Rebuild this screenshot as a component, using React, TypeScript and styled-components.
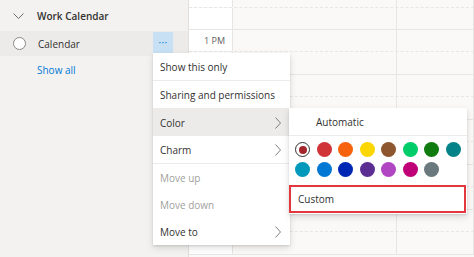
import React from 'react';
import styled, { createGlobalStyle } from 'styled-components';

const GlobalStyle = createGlobalStyle`
    html, body {
        margin: 0;
        padding: 0;
        width: 474px;
        height: 257px;
        overflow: hidden;
        font-family: "Open Sans", "Noto Sans", sans-serif;
    }
`;

const Page = styled.div`
    position: relative;
    display: flex;
    width: 474px;
    height: 257px;
    overflow: hidden;
    background: #faf9f8;
`;

const Sidebar = styled.div`
    width: 188px;
    flex-shrink: 0;
    background: #f3f2f1;
    border-right: 1px solid #e1dfdd;
    display: flex;
    flex-direction: column;
`;

const GroupHeader = styled.div`
    height: 31px;
    display: flex;
    align-items: center;
    padding-left: 13px;
    gap: 13px;
    font-size: 10px;
    font-weight: 600;
    color: #323130;
`;

const CalendarRow = styled.div`
    height: 25px;
    display: flex;
    align-items: center;
    padding-left: 13px;
    gap: 12px;
    background: #edebe9;
    font-size: 10px;
    color: #323130;
`;

const RadioCircle = styled.span`
    width: 11px;
    height: 11px;
    border-radius: 50%;
    border: 1px solid #8a8886;
    background: #fff;
`;

const DotsButton = styled.div`
    margin-left: auto;
    margin-right: 15px;
    width: 20px;
    height: 23px;
    background: #c7e0f4;
    color: #0078d4;
    display: flex;
    align-items: center;
    justify-content: center;
    font-size: 10px;
    letter-spacing: 0.3px;
    line-height: 1;
    padding-bottom: 3px;
    box-sizing: border-box;
`;

const ShowAll = styled.div`
    padding: 7px 0 0 37px;
    font-size: 10px;
    color: #0078d4;
`;

const Grid = styled.div`
    flex: 1;
    display: flex;
    flex-direction: column;
`;

const Slot = styled.div<{ $h: number; $solid: boolean }>`
    height: ${p => p.$h}px;
    flex-shrink: 0;
    display: flex;
    box-sizing: border-box;
    border-bottom: 1px ${p => (p.$solid ? 'solid' : 'dashed')} #e8e6e4;
`;

const TimeCell = styled.div`
    width: 44px;
    flex-shrink: 0;
    background: #fff;
    border-right: 1px solid #e8e6e4;
    display: flex;
    align-items: center;
    justify-content: flex-end;
    padding-right: 7px;
    box-sizing: border-box;
    font-size: 9px;
    color: #605e5c;
`;

const DayCell = styled.div<{ $w?: number }>`
    width: ${p => (p.$w ? `${p.$w}px` : 'auto')};
    flex: ${p => (p.$w ? '0 0 auto' : '1')};
    border-right: 1px solid #e8e6e4;
`;

const Menu = styled.div`
    position: absolute;
    left: 153px;
    top: 53px;
    width: 137px;
    background: #fff;
    box-shadow: 0 3px 7px rgba(0, 0, 0, 0.13), 0 0.6px 1.8px rgba(0, 0, 0, 0.11);
    display: flex;
    flex-direction: column;
    z-index: 2;
`;

const MenuItem = styled.div<{ $active?: boolean; $disabled?: boolean }>`
    height: 27px;
    display: flex;
    align-items: center;
    justify-content: space-between;
    padding: 0 9px 0 7px;
    font-size: 10px;
    white-space: nowrap;
    background: ${p => (p.$active ? '#edebe9' : '#fff')};
    color: ${p => (p.$disabled ? '#a19f9d' : '#323130')};
`;

const Divider = styled.div`
    height: 1px;
    background: #edebe9;
`;

const SubMenu = styled.div`
    position: absolute;
    left: 289px;
    top: 108px;
    width: 178px;
    background: #fff;
    box-shadow: 0 3px 7px rgba(0, 0, 0, 0.13), 0 0.6px 1.8px rgba(0, 0, 0, 0.11);
    display: flex;
    flex-direction: column;
    z-index: 3;
`;

const AutoRow = styled.div`
    height: 27px;
    display: flex;
    align-items: center;
    padding-left: 27px;
    font-size: 10px;
    color: #323130;
    border-bottom: 1px solid #edebe9;
`;

const Swatches = styled.div`
    display: grid;
    grid-template-columns: repeat(8, 15px);
    column-gap: 6.5px;
    row-gap: 4.5px;
    padding: 6px 0 8px 6px;
`;

const Swatch = styled.span<{ $color: string }>`
    width: 15px;
    height: 15px;
    border-radius: 50%;
    background: ${p => p.$color};
`;

const SelectedSwatch = styled.span<{ $color: string }>`
    width: 15px;
    height: 15px;
    border-radius: 50%;
    box-sizing: border-box;
    border: 1px solid #323130;
    background: #fff;
    display: flex;
    align-items: center;
    justify-content: center;
    &::after {
        content: '';
        width: 8px;
        height: 8px;
        border-radius: 50%;
        background: ${p => p.$color};
    }
`;

const CustomBox = styled.div`
    height: 28px;
    margin: 0 1px 1px 0;
    box-sizing: border-box;
    border: 2px solid #e2373d;
    display: flex;
    align-items: center;
    padding-left: 7px;
    font-size: 10px;
    color: #323130;
`;

function ChevronRight() {
    return (
        <svg width="6" height="12" viewBox="0 0 6 12">
            <path d="M0.5 0.5 L5.5 6 L0.5 11.5" fill="none" stroke="#605e5c" strokeWidth="0.8" />
        </svg>
    );
}

function ChevronDown() {
    return (
        <svg width="11" height="6" viewBox="0 0 11 6">
            <path d="M0.5 0.5 L5.5 5.5 L10.5 0.5" fill="none" stroke="#605e5c" strokeWidth="0.9" />
        </svg>
    );
}

const colors = [
    '#d13438', '#f7630c', '#fcd600', '#8e562e', '#00cc6a', '#107c10', '#038387',
    '#0099bc', '#0078d4', '#0027b4', '#5c2e91', '#b146c2', '#bf0077', '#69797e',
];

// line after each slot: first is the half hour above 1 PM
const slots: { h: number; solid: boolean; label?: string }[] = [
    { h: 8, solid: false },
    { h: 22, solid: true },
    { h: 22, solid: false, label: '1 PM' },
    { h: 23, solid: true },
    { h: 22, solid: false },
    { h: 23, solid: true },
    { h: 22, solid: false },
    { h: 23, solid: true },
    { h: 22, solid: false },
    { h: 23, solid: true },
    { h: 22, solid: false },
    { h: 23, solid: true },
];

export default function App() {
    return (
        <>
            <GlobalStyle />
            <Page>
                <Sidebar>
                    <GroupHeader>
                        <ChevronDown />
                        Work Calendar
                    </GroupHeader>
                    <CalendarRow>
                        <RadioCircle />
                        Calendar
                        <DotsButton>···</DotsButton>
                    </CalendarRow>
                    <ShowAll>Show all</ShowAll>
                </Sidebar>
                <Grid>
                    {slots.map((s, i) => (
                        <Slot key={i} $h={s.h} $solid={s.solid}>
                            <TimeCell>{s.label}</TimeCell>
                            <DayCell $w={163} />
                            <DayCell />
                        </Slot>
                    ))}
                </Grid>

                <Menu>
                    <MenuItem>Show this only</MenuItem>
                    <Divider />
                    <MenuItem>Sharing and permissions</MenuItem>
                    <Divider />
                    <MenuItem $active>Color<ChevronRight /></MenuItem>
                    <MenuItem>Charm<ChevronRight /></MenuItem>
                    <Divider />
                    <MenuItem $disabled>Move up</MenuItem>
                    <MenuItem $disabled>Move down</MenuItem>
                    <MenuItem>Move to<ChevronRight /></MenuItem>
                </Menu>

                <SubMenu>
                    <AutoRow>Automatic</AutoRow>
                    <Swatches>
                        <SelectedSwatch $color="#a4262c" />
                        {colors.map(c => (
                            <Swatch key={c} $color={c} />
                        ))}
                    </Swatches>
                    <CustomBox>Custom</CustomBox>
                </SubMenu>
            </Page>
        </>
    );
}
